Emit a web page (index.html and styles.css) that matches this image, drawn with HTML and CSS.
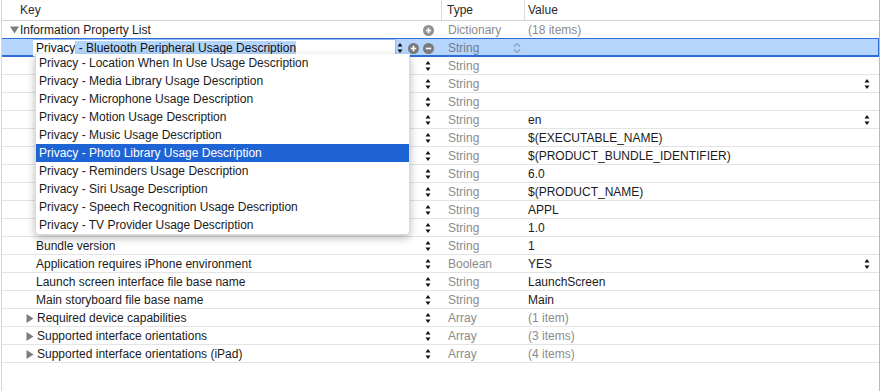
FILE: index.html
```html
<!doctype html>
<html lang="en-US">
  <head>
    <meta charset="UTF-8" />
    <meta name="viewport" content="width=device-width, initial-scale=1" />
    <link rel="stylesheet" href="styles.css">
  </head>
  <body>
    <div class="plist">
      <div class="plist__header">
        <div class="plist__head plist__head--key">Key</div>
        <div class="plist__head plist__head--type">Type</div>
        <div class="plist__head plist__head--value">Value</div>
      </div>

      <div class="row row--root">
        <div class="key">
          <svg class="disclosure" width="9" height="8" viewBox="0 0 9 8"><path d="M0 0.5H9L4.5 7.5Z" /></svg>
          <span class="key__name">Information Property List</span>
          <span class="key__ctrls key__ctrls--root">
            <svg class="btn-circle" width="11" height="11" viewBox="0 0 11 11"><circle cx="5.5" cy="5.5" r="5.5" /><path d="M2.8 5.5h5.4M5.5 2.8v5.4" /></svg>
          </span>
        </div>
        <div class="type">Dictionary</div>
        <div class="value value--muted">(18 items)</div>
      </div>

      <div class="row row--selected">
        <div class="key key--editing">
          <span class="field">Privacy<span class="field__sel"> - Bluetooth Peripheral Usage Description</span></span>
          <span class="key__ctrls key__ctrls--edit">
            <svg class="stepper" width="6" height="12" viewBox="0 0 6 12"><path d="M0.5 4.5L3 1L5.5 4.5Z M0.5 7.5H5.5L3 11Z" /></svg>
            <svg class="btn-circle" width="11" height="11" viewBox="0 0 11 11"><circle cx="5.5" cy="5.5" r="5.5" /><path d="M2.8 5.5h5.4M5.5 2.8v5.4" /></svg>
            <svg class="btn-circle" width="11" height="11" viewBox="0 0 11 11"><circle cx="5.5" cy="5.5" r="5.5" /><path d="M2.8 5.5h5.4" /></svg>
          </span>
        </div>
        <div class="type type--popup">String
          <svg class="chevrons" width="8" height="12" viewBox="0 0 8 12"><path d="M1 4.5L4 1.5L7 4.5M1 7.5L4 10.5L7 7.5" /></svg>
        </div>
        <div class="value"></div>
      </div>

      <!-- keys of these rows sit under the completion list -->
      <div class="row">
        <div class="key"><span class="key__name"></span><span class="key__ctrls"><svg class="stepper" width="6" height="12" viewBox="0 0 6 12"><path d="M0.5 4.5L3 1L5.5 4.5Z M0.5 7.5H5.5L3 11Z" /></svg></span></div>
        <div class="type">String</div>
        <div class="value"></div>
      </div>
      <div class="row">
        <div class="key"><span class="key__name"></span><span class="key__ctrls"><svg class="stepper" width="6" height="12" viewBox="0 0 6 12"><path d="M0.5 4.5L3 1L5.5 4.5Z M0.5 7.5H5.5L3 11Z" /></svg></span></div>
        <div class="type">String</div>
        <div class="value"><svg class="stepper value__popup" width="6" height="12" viewBox="0 0 6 12"><path d="M0.5 4.5L3 1L5.5 4.5Z M0.5 7.5H5.5L3 11Z" /></svg></div>
      </div>
      <div class="row">
        <div class="key"><span class="key__name"></span><span class="key__ctrls"><svg class="stepper" width="6" height="12" viewBox="0 0 6 12"><path d="M0.5 4.5L3 1L5.5 4.5Z M0.5 7.5H5.5L3 11Z" /></svg></span></div>
        <div class="type">String</div>
        <div class="value"></div>
      </div>
      <div class="row">
        <div class="key"><span class="key__name"></span><span class="key__ctrls"><svg class="stepper" width="6" height="12" viewBox="0 0 6 12"><path d="M0.5 4.5L3 1L5.5 4.5Z M0.5 7.5H5.5L3 11Z" /></svg></span></div>
        <div class="type">String</div>
        <div class="value">en<svg class="stepper value__popup" width="6" height="12" viewBox="0 0 6 12"><path d="M0.5 4.5L3 1L5.5 4.5Z M0.5 7.5H5.5L3 11Z" /></svg></div>
      </div>
      <div class="row">
        <div class="key"><span class="key__name"></span><span class="key__ctrls"><svg class="stepper" width="6" height="12" viewBox="0 0 6 12"><path d="M0.5 4.5L3 1L5.5 4.5Z M0.5 7.5H5.5L3 11Z" /></svg></span></div>
        <div class="type">String</div>
        <div class="value">$(EXECUTABLE_NAME)</div>
      </div>
      <div class="row">
        <div class="key"><span class="key__name"></span><span class="key__ctrls"><svg class="stepper" width="6" height="12" viewBox="0 0 6 12"><path d="M0.5 4.5L3 1L5.5 4.5Z M0.5 7.5H5.5L3 11Z" /></svg></span></div>
        <div class="type">String</div>
        <div class="value">$(PRODUCT_BUNDLE_IDENTIFIER)</div>
      </div>
      <div class="row">
        <div class="key"><span class="key__name"></span><span class="key__ctrls"><svg class="stepper" width="6" height="12" viewBox="0 0 6 12"><path d="M0.5 4.5L3 1L5.5 4.5Z M0.5 7.5H5.5L3 11Z" /></svg></span></div>
        <div class="type">String</div>
        <div class="value">6.0</div>
      </div>
      <div class="row">
        <div class="key"><span class="key__name"></span><span class="key__ctrls"><svg class="stepper" width="6" height="12" viewBox="0 0 6 12"><path d="M0.5 4.5L3 1L5.5 4.5Z M0.5 7.5H5.5L3 11Z" /></svg></span></div>
        <div class="type">String</div>
        <div class="value">$(PRODUCT_NAME)</div>
      </div>
      <div class="row">
        <div class="key"><span class="key__name"></span><span class="key__ctrls"><svg class="stepper" width="6" height="12" viewBox="0 0 6 12"><path d="M0.5 4.5L3 1L5.5 4.5Z M0.5 7.5H5.5L3 11Z" /></svg></span></div>
        <div class="type">String</div>
        <div class="value">APPL</div>
      </div>
      <div class="row">
        <div class="key"><span class="key__name"></span><span class="key__ctrls"><svg class="stepper" width="6" height="12" viewBox="0 0 6 12"><path d="M0.5 4.5L3 1L5.5 4.5Z M0.5 7.5H5.5L3 11Z" /></svg></span></div>
        <div class="type">String</div>
        <div class="value">1.0</div>
      </div>
      <div class="row">
        <div class="key"><span class="key__name">Bundle version</span><span class="key__ctrls"><svg class="stepper" width="6" height="12" viewBox="0 0 6 12"><path d="M0.5 4.5L3 1L5.5 4.5Z M0.5 7.5H5.5L3 11Z" /></svg></span></div>
        <div class="type">String</div>
        <div class="value">1</div>
      </div>
      <div class="row">
        <div class="key"><span class="key__name">Application requires iPhone environment</span><span class="key__ctrls"><svg class="stepper" width="6" height="12" viewBox="0 0 6 12"><path d="M0.5 4.5L3 1L5.5 4.5Z M0.5 7.5H5.5L3 11Z" /></svg></span></div>
        <div class="type">Boolean</div>
        <div class="value">YES<svg class="stepper value__popup" width="6" height="12" viewBox="0 0 6 12"><path d="M0.5 4.5L3 1L5.5 4.5Z M0.5 7.5H5.5L3 11Z" /></svg></div>
      </div>
      <div class="row">
        <div class="key"><span class="key__name">Launch screen interface file base name</span><span class="key__ctrls"><svg class="stepper" width="6" height="12" viewBox="0 0 6 12"><path d="M0.5 4.5L3 1L5.5 4.5Z M0.5 7.5H5.5L3 11Z" /></svg></span></div>
        <div class="type">String</div>
        <div class="value">LaunchScreen</div>
      </div>
      <div class="row">
        <div class="key"><span class="key__name">Main storyboard file base name</span><span class="key__ctrls"><svg class="stepper" width="6" height="12" viewBox="0 0 6 12"><path d="M0.5 4.5L3 1L5.5 4.5Z M0.5 7.5H5.5L3 11Z" /></svg></span></div>
        <div class="type">String</div>
        <div class="value">Main</div>
      </div>
      <div class="row">
        <div class="key key--group"><svg class="disclosure" width="8" height="9" viewBox="0 0 8 9"><path d="M0.5 0V9L7.5 4.5Z" /></svg><span class="key__name">Required device capabilities</span><span class="key__ctrls"><svg class="stepper" width="6" height="12" viewBox="0 0 6 12"><path d="M0.5 4.5L3 1L5.5 4.5Z M0.5 7.5H5.5L3 11Z" /></svg></span></div>
        <div class="type">Array</div>
        <div class="value value--muted">(1 item)</div>
      </div>
      <div class="row">
        <div class="key key--group"><svg class="disclosure" width="8" height="9" viewBox="0 0 8 9"><path d="M0.5 0V9L7.5 4.5Z" /></svg><span class="key__name">Supported interface orientations</span><span class="key__ctrls"><svg class="stepper" width="6" height="12" viewBox="0 0 6 12"><path d="M0.5 4.5L3 1L5.5 4.5Z M0.5 7.5H5.5L3 11Z" /></svg></span></div>
        <div class="type">Array</div>
        <div class="value value--muted">(3 items)</div>
      </div>
      <div class="row">
        <div class="key key--group"><svg class="disclosure" width="8" height="9" viewBox="0 0 8 9"><path d="M0.5 0V9L7.5 4.5Z" /></svg><span class="key__name">Supported interface orientations (iPad)</span><span class="key__ctrls"><svg class="stepper" width="6" height="12" viewBox="0 0 6 12"><path d="M0.5 4.5L3 1L5.5 4.5Z M0.5 7.5H5.5L3 11Z" /></svg></span></div>
        <div class="type">Array</div>
        <div class="value value--muted">(4 items)</div>
      </div>

      <ul class="completion">
        <li>Privacy - Location When In Use Usage Description</li>
        <li>Privacy - Media Library Usage Description</li>
        <li>Privacy - Microphone Usage Description</li>
        <li>Privacy - Motion Usage Description</li>
        <li>Privacy - Music Usage Description</li>
        <li class="is-active">Privacy - Photo Library Usage Description</li>
        <li>Privacy - Reminders Usage Description</li>
        <li>Privacy - Siri Usage Description</li>
        <li>Privacy - Speech Recognition Usage Description</li>
        <li>Privacy - TV Provider Usage Description</li>
      </ul>
    </div>
  </body>
</html>
```

FILE: styles.css
```css
* {
  box-sizing: border-box;
}

body {
  margin: 0;
  background: #fff;
  font-family: "Liberation Sans", Arial, sans-serif;
  font-size: 12px;
  color: #1b1b1b;
}

.plist {
  position: relative;
  height: 391px;
  margin: 0 2px 0 1px;
  border-left: 1px solid #d6d6d6;
  border-right: 1px solid #b9b9b9;
}

/* header */
.plist__header {
  display: grid;
  grid-template-columns: 440px 83px 1fr;
  height: 21px;
  border-bottom: 1px solid #d4d4d4;
}

.plist__head {
  line-height: 20px;
  color: #2a2a2a;
}

.plist__head--key {
  padding-left: 18px;
  border-right: 1px solid #dcdcdc;
}

.plist__head--type {
  padding-left: 5px;
  border-right: 1px solid #dcdcdc;
}

.plist__head--value {
  padding-left: 3px;
}

/* rows */
.row {
  display: grid;
  grid-template-columns: 440px 83px 1fr;
  height: 18px;
  border-bottom: 1px solid #e4e4e4;
  align-items: center;
  line-height: 18px;
}

.row--selected {
  background: #b5d5fc;
  box-shadow: 0 -1px 0 #2c6fd8, inset 0 -1px 0 #2c6fd8, inset -1px 0 0 #2c6fd8;
  border-bottom-color: #2c6fd8;
}

.key {
  display: flex;
  align-items: center;
  height: 17px;
  padding-left: 34px;
}

.row--root .key {
  padding-left: 8px;
}

.key--group {
  padding-left: 24px;
}

.key--editing {
  padding-left: 31px;
}

.key__name {
  flex: 1;
  white-space: nowrap;
}

.disclosure {
  flex: none;
  fill: #7d7d7d;
  margin-right: 3px;
}

.row--root .disclosure {
  margin-right: 1px;
}

.key__ctrls {
  display: flex;
  align-items: center;
  margin-left: auto;
  margin-right: 11px;
}

.key__ctrls--root {
  margin-right: 8px;
}

.key__ctrls--edit {
  gap: 4px;
  margin-right: 8px;
}

.key__ctrls--edit .stepper {
  margin-right: 1px;
}

.stepper {
  flex: none;
  fill: #111;
}

.btn-circle {
  flex: none;
}

.btn-circle circle {
  fill: #7a7a7a;
}

.row--root .btn-circle circle {
  fill: #8f8f8f;
}

.btn-circle path {
  stroke: #fff;
  stroke-width: 1.7;
}

.field {
  flex: 0 0 363px;
  height: 18px;
  margin-top: -1px;
  padding-left: 3px;
  background: #fff;
  border: 1px solid #94b9ee;
  border-left: none;
  line-height: 17px;
  color: #111;
  white-space: nowrap;
  overflow: hidden;
}

.field__sel {
  background: #b3d5fd;
}

.type {
  padding-left: 6px;
  color: #8b8b8b;
}

.type--popup {
  display: flex;
  align-items: center;
  color: #6f7c8c;
}

.chevrons {
  margin-left: auto;
  margin-right: 4px;
  fill: none;
  stroke: #8f9aa8;
  stroke-width: 1.1;
}

.value {
  display: flex;
  align-items: center;
  padding-left: 3px;
  white-space: nowrap;
  color: #1b1b1b;
}

.value--muted {
  color: #8b8b8b;
}

.value__popup {
  margin-left: auto;
  margin-right: 9px;
}

/* autocomplete list */
.completion {
  position: absolute;
  top: 54px;
  left: 33px;
  width: 375px;
  margin: 0;
  padding: 0;
  list-style: none;
  background: #fff;
  border: 1px solid rgba(0, 0, 0, 0.14);
  border-top: none;
  border-radius: 0 0 4px 4px;
  box-shadow: 0 3px 9px rgba(0, 0, 0, 0.28);
}

.completion li {
  height: 18px;
  padding-left: 3px;
  line-height: 19px;
  color: #1b1b1b;
  white-space: nowrap;
}

.completion li.is-active {
  background: #1f64d4;
  color: #fff;
}
```
